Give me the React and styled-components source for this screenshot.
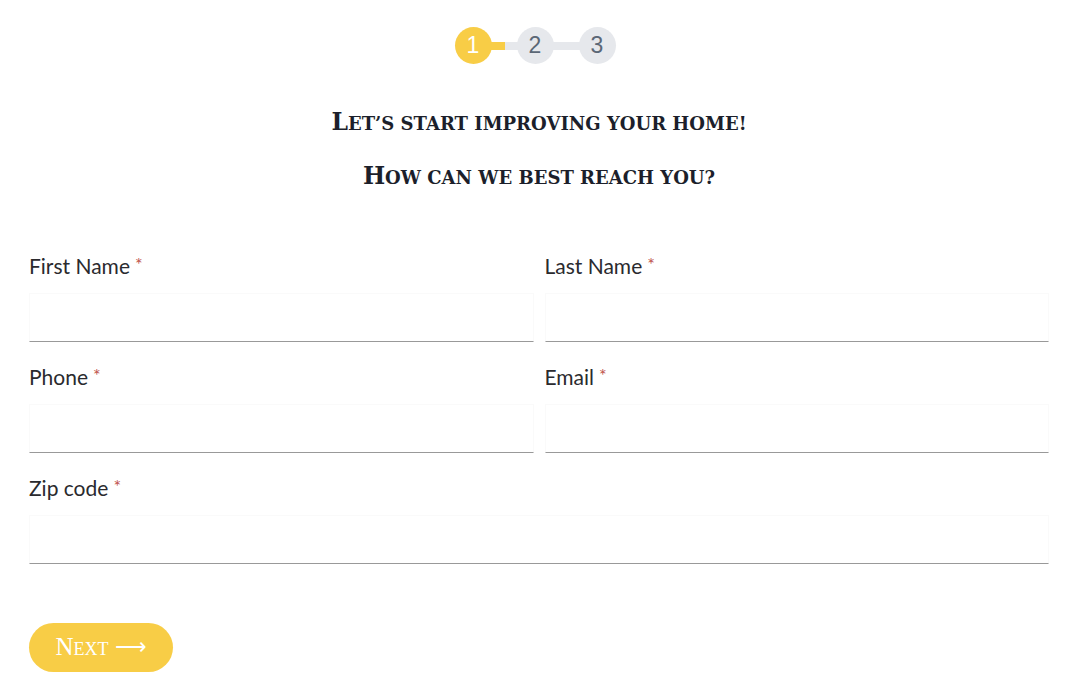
import React from 'react';
import styled, { createGlobalStyle } from 'styled-components';

const GlobalStyle = createGlobalStyle`
  html, body {
    margin: 0;
    padding: 0;
    background: #fff;
  }
  body {
    font-family: Lato, "Open Sans", sans-serif;
  }
  * { box-sizing: border-box; }
`;

const Page = styled.div`
  width: 1073px;
  padding: 27px 24px 0 29px;
`;

const Steps = styled.div`
  display: flex;
  justify-content: center;
  align-items: center;
  margin-right: 8px;
`;

const Step = styled.div`
  width: 37px;
  height: 37px;
  border-radius: 50%;
  display: flex;
  align-items: center;
  justify-content: center;
  font-family: "Liberation Sans", Arial, sans-serif;
  font-size: 23px;
  background: ${p => (p.$active ? '#f8cd46' : '#e6e8ec')};
  color: ${p => (p.$active ? '#fff' : '#5b6776')};
  position: relative;
  z-index: 1;
`;

const Connector = styled.div`
  width: 27px;
  height: 8px;
  margin: 0 -1px;
  background: ${p =>
    p.$half ? 'linear-gradient(to right, #f8cd46 0 14px, #e6e8ec 14px)' : '#e6e8ec'};
`;

const Heading = styled.h2`
  margin: ${p => p.$top}px 0 0;
  text-align: center;
  font-family: "DejaVu Serif", "Liberation Serif", serif;
  text-transform: uppercase;
  font-weight: 700;
  font-size: 18px;
  line-height: 30px;
  color: #1c1f2b;
`;

const Cap = styled.span`
  font-size: ${p => p.$size || 23.5}px;
`;

const Form = styled.div`
  display: grid;
  grid-template-columns: 1fr 1fr;
  column-gap: 11px;
  row-gap: 23px;
  margin-top: 61px;
`;

const Field = styled.div`
  display: flex;
  flex-direction: column;
  grid-column: ${p => (p.$wide ? '1 / -1' : 'auto')};
`;

const Label = styled.label`
  font-size: 21px;
  line-height: 24px;
  color: #2a2a2e;
`;

const Req = styled.span`
  color: #c0524c;
  font-size: 18px;
  margin-left: 5px;
  position: relative;
  top: -3px;
`;

const Input = styled.input`
  margin-top: 14px;
  height: 49px;
  border: 1px solid #fafafa;
  border-bottom: 1px solid #999;
  outline: none;
  background: #fff;
  font-size: 18px;
  font-family: Lato, sans-serif;
  padding: 0 8px;
`;

const NextButton = styled.button`
  margin-top: 59px;
  width: 144px;
  height: 49px;
  border: none;
  border-radius: 25px;
  background: #f8cd46;
  color: #fff;
  font-family: "Liberation Serif", "Times New Roman", serif;
  text-transform: uppercase;
  font-size: 18px;
  cursor: pointer;
  display: flex;
  align-items: center;
  justify-content: center;
  gap: 6px;
  padding: 0 0 2px;
`;

const Arrow = styled.span`
  font-size: 22px;
  line-height: 1;
`;

const fields = [
  { label: 'First Name' },
  { label: 'Last Name' },
  { label: 'Phone' },
  { label: 'Email' },
  { label: 'Zip code', wide: true },
];

export default function App() {
  return (
    <>
      <GlobalStyle />
      <Page>
        <Steps>
          <Step $active>1</Step>
          <Connector $half />
          <Step>2</Step>
          <Connector />
          <Step>3</Step>
        </Steps>
        <Heading $top={43}>
          <Cap>L</Cap>et’s start improving your home!
        </Heading>
        <Heading $top={22}>
          <Cap>H</Cap>ow can we best reach you?
        </Heading>
        <Form>
          {fields.map(f => (
            <Field key={f.label} $wide={f.wide}>
              <Label>
                {f.label}
                <Req>*</Req>
              </Label>
              <Input type="text" />
            </Field>
          ))}
        </Form>
        <NextButton>
          <span>
            <Cap $size={25}>N</Cap>ext
          </span>
          <Arrow>⟶</Arrow>
        </NextButton>
      </Page>
    </>
  );
}
